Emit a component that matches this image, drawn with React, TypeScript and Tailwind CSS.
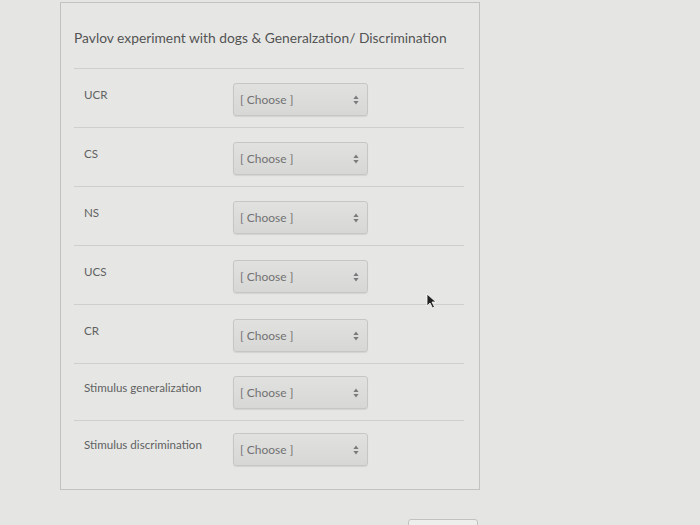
import React from "react";

const rows = [
  "UCR",
  "CS",
  "NS",
  "UCS",
  "CR",
  "Stimulus generalization",
  "Stimulus discrimination",
];

function Arrows() {
  return (
    <svg width="6" height="10" viewBox="0 0 6 10" className="shrink-0">
      <path d="M3 0.5 L5.6 4 L0.4 4 Z" fill="#7a7a7a" />
      <path d="M3 9.5 L5.6 6 L0.4 6 Z" fill="#7a7a7a" />
    </svg>
  );
}

export default function App() {
  return (
    <div className="relative w-[700px] h-[525px] overflow-hidden bg-[#e5e6e4] font-['Lato','Noto_Sans',sans-serif]">
      <div className="ml-[60px] mt-[2px] w-[420px] h-[488px] border border-[#c2c3c1] bg-[#e6e7e5] pl-[13px] pr-[15px] pt-[25px]">
        <div className="whitespace-nowrap text-[13.8px] leading-[20px] text-[#545454]">
          Pavlov experiment with dogs &amp; Generalzation/ Discrimination
        </div>
        <div className="mt-[20px]">
          {rows.map((label, i) => (
            <div
              key={label}
              className={
                i >= 5
                  ? "flex items-start border-t border-[#cfd0ce] pt-[12px] pb-[11px] pl-[10px]"
                  : "flex items-start border-t border-[#cfd0ce] pt-[14px] pb-[11px] pl-[10px]"
              }
            >
              <div className="w-[149px] mt-[4px] whitespace-nowrap text-[11.6px] leading-[16px] text-[#616161]">
                {label}
              </div>
              <div className="w-[135px] h-[33px] flex items-center justify-between rounded-[3px] border border-[#c6c7c5] bg-gradient-to-b from-[#e1e1e0] to-[#d7d8d6] shadow-[0_1px_1px_rgba(0,0,0,0.08)] pl-[6px] pr-[8px]">
                <span className="text-[12px] leading-[16px] text-[#727272]">[ Choose ]</span>
                <Arrows />
              </div>
            </div>
          ))}
        </div>
      </div>
      <div className="ml-[408px] mt-[29px] w-[70px] h-[12px] rounded-t-[3px] border border-[#c2c3c1] bg-[#eeeeed]" />
      <svg
        className="absolute left-[426px] top-[293px]"
        width="12"
        height="16"
        viewBox="0 0 12 16"
      >
        <path d="M1 1 L1 13 L4 10 L6.5 15 L8.5 14 L6 9 L10 9 Z" fill="#222" stroke="#fff" strokeWidth="0.8" />
      </svg>
    </div>
  );
}
